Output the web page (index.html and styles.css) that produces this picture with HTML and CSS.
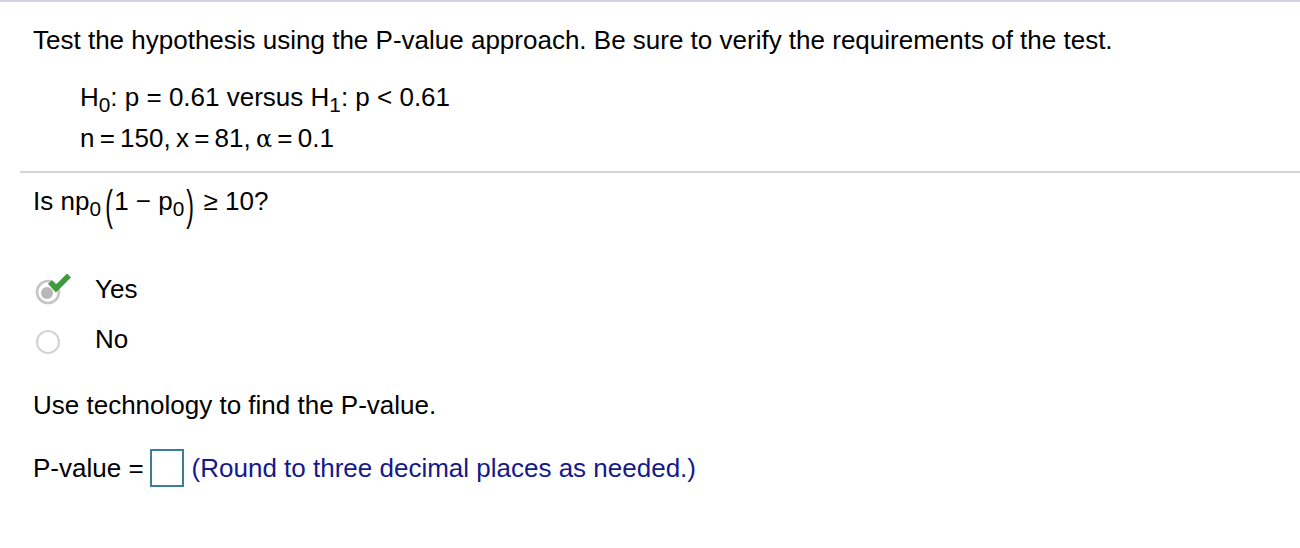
FILE: index.html
```html
<!DOCTYPE html>
<html>
<head>
<meta charset="utf-8">
<link rel="stylesheet" href="styles.css">
</head>
<body>
<div class="page">
  <div class="question">
    <p class="lead">Test the hypothesis using the P-value approach. Be sure to verify the requirements of the test.</p>
    <div class="givens">
      <div class="given h">H<sub>0</sub>: p = 0.61 versus H<sub>1</sub>: p &lt; 0.61</div>
      <div class="given n">n = 150, x = 81, <span class="alpha">α</span> = 0.1</div>
    </div>
  </div>
  <div class="answer">
    <div class="ask">Is np<sub>0</sub> <span class="paren open">(</span>1 − p<sub>0</sub><span class="paren close">)</span> ≥ 10?</div>
    <div class="choices">
      <div class="choice">
        <span class="radio">
          <svg viewBox="0 0 40 34" width="40" height="34">
            <circle cx="15" cy="20" r="11" fill="none" stroke="#c6c6c6" stroke-width="2.6"/>
            <circle cx="14" cy="21" r="6" fill="#b8b8b8"/>
            <path d="M17 10 L23 16.5 L36 3.5" fill="none" stroke="#3d9a3d" stroke-width="5.5"/>
          </svg>
        </span>
        <span class="label">Yes</span>
      </div>
      <div class="choice">
        <span class="radio">
          <svg viewBox="0 0 40 34" width="40" height="34">
            <circle cx="15" cy="20" r="11" fill="none" stroke="#d4d4d4" stroke-width="2.2"/>
          </svg>
        </span>
        <span class="label">No</span>
      </div>
    </div>
    <p class="tech">Use technology to find the P-value.</p>
    <div class="pval">
      <span>P-value =</span>
      <span class="box"></span>
      <span class="hint">(Round to three decimal places as needed.)</span>
    </div>
  </div>
</div>
</body>
</html>
```

FILE: styles.css
```css
html, body {
  margin: 0;
  padding: 0;
  background: #ffffff;
}
body {
  font-family: "Liberation Sans", Arial, sans-serif;
  font-size: 26px;
  color: #000;
}
.page {
  width: 1300px;
  height: 548px;
  border-top: 2px solid #d2d5e1;
  box-sizing: border-box;
}
.question {
  padding: 23px 0 0 33px;
}
.lead {
  margin: 0;
  line-height: 30px;
}
.givens {
  padding: 27px 0 0 47px;
}
.given {
  line-height: 30px;
}
.given.n {
  margin-top: 11px;
  word-spacing: -2px;
}
sub {
  font-size: 0.8em;
  vertical-align: -0.3em;
  line-height: 0;
}
.alpha {
  font-family: "DejaVu Serif", serif;
  font-size: 0.92em;
}
.answer {
  margin: 17px 0 0 20px;
  border-top: 2px solid #d2d5e1;
  padding: 11px 0 0 13px;
}
.ask {
  line-height: 34px;
  height: 34px;
}
.paren {
  font-size: 42px;
  display: inline-block;
  transform: scaleX(0.55);
  vertical-align: -10px;
  line-height: 0;
}
.paren.open {
  margin: 0 -2px 0 -6px;
}
.paren.close {
  margin: 0 -1px 0 -1px;
}
.choices {
  margin-top: 46px;
}
.choice {
  display: flex;
  align-items: center;
  height: 50px;
}
.radio {
  width: 40px;
  height: 34px;
  display: inline-block;
  margin-right: 22px;
}
.radio svg {
  display: block;
}
.tech {
  margin: 26px 0 0 0;
  line-height: 30px;
}
.pval {
  margin-top: 29px;
  display: flex;
  align-items: center;
}
.box {
  width: 30px;
  height: 34px;
  border: 2px solid #3c7d99;
  margin: 0 8px 0 6px;
}
.hint {
  color: #15198c;
}
```
